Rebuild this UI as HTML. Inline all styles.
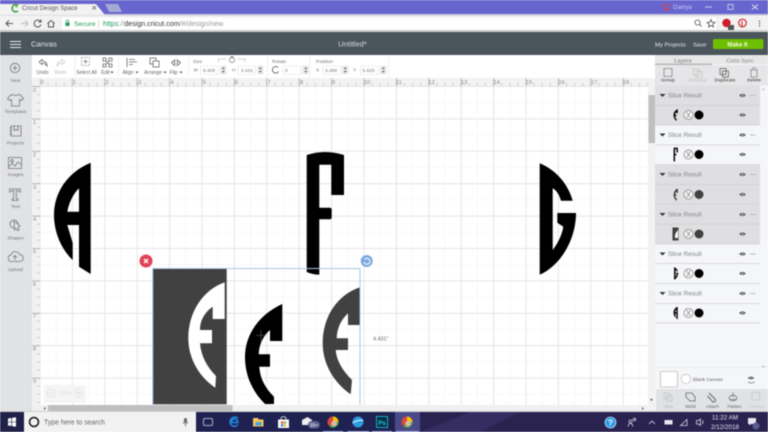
<!DOCTYPE html>
<html lang="en">
<head>
<meta charset="utf-8">
<title>Cricut Design Space</title>
<style>
html,body{margin:0;padding:0;width:768px;height:432px;overflow:hidden;background:#fff}
svg{display:block;position:absolute;left:0;top:0;filter:blur(.55px)}
text{font-family:"Liberation Sans",sans-serif}
.lb{font-size:5px;fill:#666;text-anchor:middle}
.sm{font-size:4.800px;fill:#777}
.sl{font-size:6.400px;fill:#85858b}
.ic{fill:none;stroke:#666;stroke-width:.8}
.side{font-size:4.800px;fill:#777;text-anchor:middle}
.ruler{font-size:5.600px;fill:#888}
</style>
</head>
<body>
<svg width="768" height="432" viewBox="0 0 768 432" xmlns="http://www.w3.org/2000/svg">
<defs>
<pattern id="gmin" x="39.5" y="86" width="16.2" height="16.2" patternUnits="userSpaceOnUse"><path d="M.5 0V16.2M0 .5H16.2" stroke="#f8f8f8" stroke-width="1" fill="none"/></pattern>
<pattern id="gmaj" x="39.5" y="86" width="32.4" height="32.4" patternUnits="userSpaceOnUse"><path d="M.5 0V32.4M0 .5H32.4" stroke="#e6e6e8" stroke-width="1" fill="none"/></pattern>
<pattern id="rx" x="39.5" y="78" width="8.1" height="8" patternUnits="userSpaceOnUse"><path d="M.5 5V8" stroke="#bbb" stroke-width=".7"/></pattern>
<pattern id="rxm" x="39.5" y="78" width="32.4" height="8" patternUnits="userSpaceOnUse"><path d="M.5 0V8" stroke="#aaa" stroke-width=".8"/></pattern>
<pattern id="ry" x="32" y="86" width="8" height="8.1" patternUnits="userSpaceOnUse"><path d="M5 .5H8" stroke="#bbb" stroke-width=".7"/></pattern>
<pattern id="rym" x="32" y="86" width="8" height="32.4" patternUnits="userSpaceOnUse"><path d="M0 .5H8" stroke="#aaa" stroke-width=".8"/></pattern>
<g id="eye"><path d="M-3.4 0Q0-3.2 3.4 0Q0 3.2-3.4 0Z" fill="#555"/><circle r=".9" fill="#ccc"/></g>
<g id="xc"><circle r="4.6" fill="#f4f4f6" stroke="#777" stroke-width=".6"/><path d="M-2-3L2 3M2-3L-2 3" stroke="#777" stroke-width=".6"/></g>
<path id="lA" d="M90.7 162.7C68 172 54 192 54 215C54 233 62 250 72.7 260V243L67.3 225H79V266.7L90.7 274ZM79 188.3C73 194 69 203 67.3 211.7H79Z" fill-rule="evenodd"/>
<path id="lF" d="M306.7 155Q325 149 344 155V195H331.3V164.7H319.3V207.7H330Q331.7 207.7 331.7 210V217Q331.7 219.3 330 219.3H319.3V274.7Q312 274.5 306.7 272Z"/>
<path id="lG" d="M539.7 163.3C556 170 568 184 572.7 200.7H561C559 194 556 190 552.7 188.3V250C558 243 562 235 563.3 226.7L557.3 222.7V213H576C576 240 560 266 539.7 274.7Z"/>
<path id="lE" d="M282.3 304C260 314 245 334 245 356.7C245 375 252 391 265 404H274V396.7C265 388 260 378 259.3 366.7H270V354.3H258.7C259 345 263 336 270 330V341H282.3Z"/>
<path id="lE2" d="M360 287.3C337 295 322.7 317 322.7 343.3C322.7 363 333 382 350.7 394.3L352 380C343 371 336.5 361 335.7 350H348V338.3H336.7C337 328 341 320 348 313.3V325H360Z"/>
</defs>

<!-- browser title bar -->
<rect width="768" height="15" fill="#6766cf"/>
<rect y="14" width="768" height="1.5" fill="#c9c9dc"/>
<path d="M0 15V4H96L105 15Z" fill="#f2f2f3"/>
<path d="M105 4H118L122 12H109Z" fill="#a5a9d6"/>
<path d="M18 5.5A3.6 3.6 0 1 0 18 11" fill="none" stroke="#43a047" stroke-width="1.6"/>
<circle cx="16.5" cy="6.5" r="1.2" fill="#7cc242"/>
<text x="22" y="10" font-size="6.100" fill="#555">Cricut Design Space</text>
<path d="M92.5 6L96 9.5M96 6L92.5 9.5" stroke="#666" stroke-width=".8"/>
<path d="M663 4.5H669V9L666 10.5V8.500H663Z" fill="none" stroke="#d2404a" stroke-width="1"/>
<text x="673" y="9" font-size="6" fill="#c9c9ea">Dainya</text>
<path d="M705 7H712" stroke="#c9c9ea" stroke-width="1"/>
<rect x="728" y="4.5" width="5" height="5" fill="none" stroke="#c9c9ea" stroke-width=".9"/>
<path d="M752 4.5L758 9.5M758 4.5L752 9.5" stroke="#dcdcf0" stroke-width="1"/>

<!-- browser toolbar -->
<rect y="15.5" width="768" height="15" fill="#f2f2f2"/>
<rect y="30" width="768" height="2" fill="#cfcfcf"/>
<path d="M13 23.5H6M9 20.5L6 23.5L9 26.5" fill="none" stroke="#555" stroke-width="1"/>
<path d="M21 23.5H28M25 20.5L28 23.5L25 26.5" fill="none" stroke="#bbb" stroke-width="1"/>
<path d="M40.5 21.5A3.5 3.5 0 1 0 41 24.5M41 19.5V22H38.5" fill="none" stroke="#555" stroke-width="1"/>
<path d="M47.5 23.5L51 20.5L54.5 23.5M48.5 23V27H53.5V23" fill="none" stroke="#555" stroke-width="1"/>
<rect x="61" y="17" width="656" height="13" fill="#fff" stroke="#ddd" stroke-width=".5"/>
<rect x="65.5" y="22.5" width="4" height="3.5" fill="#1f9d55"/>
<path d="M66.3 22.5V21.3A1.2 1.2 0 0 1 68.7 21.3V22.5" fill="none" stroke="#1f9d55" stroke-width=".7"/>
<text x="74" y="26" font-size="6.800" fill="#1f9d55">Secure</text>
<path d="M98.5 19.5V28" stroke="#ccc" stroke-width=".7"/>
<text x="103" y="26" font-size="7.100"><tspan fill="#1f9d55">https</tspan><tspan fill="#999">://</tspan><tspan fill="#333">design.cricut.com</tspan><tspan fill="#999">/#/design/new</tspan></text>
<circle cx="697.5" cy="22.5" r="2.6" fill="none" stroke="#666" stroke-width=".9"/><path d="M699.5 24.5L701.5 26.5" stroke="#666" stroke-width="1"/>
<path d="M711 19.5L712.1 22.2L715 22.4L712.8 24.3L713.5 27L711 25.5L708.5 27L709.2 24.3L707 22.4L709.9 22.2Z" fill="none" stroke="#555" stroke-width=".8"/>
<circle cx="726.5" cy="23" r="4.2" fill="#d11c2a"/>
<rect x="728" y="25" width="6" height="5" fill="#555"/>
<circle cx="742.5" cy="23" r="3.8" fill="none" stroke="#cb2027" stroke-width="1.1"/><path d="M742 21V26" stroke="#cb2027" stroke-width="1"/>
<path d="M759.5 20.5V26.5" stroke="#555" stroke-width="1.2" stroke-dasharray="1.2 1.2"/>

<!-- app header -->
<rect y="32" width="768" height="23" fill="#4a555c"/>
<path d="M10 41.5H21M10 44.5H21M10 47.5H21" stroke="#eee" stroke-width="1"/>
<text x="31" y="46.500" font-size="7.600" fill="#e2e5e7">Canvas</text>
<text x="352.5" y="46.500" font-size="7.600" fill="#d8dcde" text-anchor="middle">Untitled*</text>
<text x="655" y="46.500" font-size="5.900" fill="#e6e8e9">My Projects</text>
<text x="693" y="46.500" font-size="5.900" fill="#e6e8e9">Save</text>
<rect x="713" y="39" width="50.5" height="10" rx="1.5" fill="#6fbe00"/>
<text x="737.5" y="46.4" font-size="6" font-weight="bold" fill="#f3fbe6" text-anchor="middle">Make It</text>

<!-- canvas -->
<rect x="32" y="55" width="623" height="357" fill="#fff"/>
<rect x="40" y="86" width="608" height="319" fill="url(#gmin)"/>
<rect x="40" y="86" width="608" height="319" fill="url(#gmaj)"/>

<!-- edit toolbar -->
<rect x="32" y="55" width="623" height="23" fill="#fff"/>
<path d="M75 56V77M118.5 56V77M188.5 56V77M267.5 56V77M310 56V77M388.5 56V77" stroke="#ececec" stroke-width=".8"/>
<path d="M39 62L42 59.5V61Q47 61 47 66Q45 63 42 63V64.5Z" class="ic"/>
<path d="M65 62L62 59.5V61Q57 61 57 66Q59 63 62 63V64.5Z" fill="none" stroke="#ccc" stroke-width=".8"/>
<text x="42.5" y="74" class="lb">Undo</text>
<text x="60.5" y="74" class="lb" style="fill:#bbb">Redo</text>
<rect x="81.5" y="57.5" width="8" height="8" fill="none" stroke="#888" stroke-width=".7" stroke-dasharray="1.4 1"/>
<path d="M85.5 59.5V63.5M83.5 61.5H87.5" stroke="#666" stroke-width=".7"/>
<text x="86.5" y="74" class="lb">Select All</text>
<path d="M103 58H106V61H103ZM109 58H112V61H109ZM103 64H106V67H103ZM109 64H112V67H109ZM106 61L109 64M109 61L106 64" class="ic"/>
<text x="105.500" y="74" class="lb">Edit</text><path d="M110.5 71.5H113.5L112 73.5Z" fill="#555"/>
<path d="M127 58V67M129 59.5H135M129 62H137M129 64.5H133" class="ic"/>
<text x="128" y="74" class="lb">Align</text><path d="M135.5 71.5H138.5L137 73.5Z" fill="#555"/>
<rect x="150" y="58" width="6" height="6" class="ic"/><rect x="153" y="61" width="6" height="6" fill="#fff" stroke="#666" stroke-width=".8"/>
<text x="153" y="74" class="lb">Arrange</text><path d="M163.5 71.5H166.5L165 73.5Z" fill="#555"/>
<path d="M176 58V67" stroke="#888" stroke-width=".6" stroke-dasharray="1 1"/><path d="M174.5 60V65.5L171.5 62.8ZM177.5 60V65.5L180.5 62.8Z" class="ic"/>
<text x="173.5" y="74" class="lb">Flip</text><path d="M179.5 71.5H182.5L181 73.5Z" fill="#555"/>

<text x="193" y="63" class="sm">Size</text>
<path d="M218.5 62V59H226M238 59H245V62" fill="none" stroke="#aaa" stroke-width=".6"/>
<circle cx="232" cy="60" r="2.5" fill="none" stroke="#777" stroke-width=".7"/><path d="M230.5 57.5Q232 55.5 233.5 57.5" fill="none" stroke="#777" stroke-width=".7"/>
<text x="193.5" y="71.5" class="sm">W</text>
<rect x="200.5" y="66" width="17.5" height="8.5" rx="1" fill="#fff" stroke="#e2e2e2" stroke-width=".6"/>
<text x="203" y="72" class="sm">6.408</text>
<rect x="220" y="65.5" width="6.5" height="9" rx="1" fill="#e9e9e9"/><path d="M221.8 69L223.3 67.3L224.8 69ZM221.8 71L223.3 72.7L224.8 71Z" fill="#555"/>
<text x="232" y="71.5" class="sm">H</text>
<rect x="238" y="66" width="17" height="8.5" rx="1" fill="#fff" stroke="#e2e2e2" stroke-width=".6"/>
<text x="241" y="72" class="sm">4.431</text>
<rect x="257" y="65.5" width="6.5" height="9" rx="1" fill="#e9e9e9"/><path d="M258.8 69L260.3 67.3L261.8 69ZM258.8 71L260.3 72.7L261.8 71Z" fill="#555"/>

<text x="272" y="63" class="sm">Rotate</text>
<path d="M278 67.5A3.3 3.3 0 1 0 278.5 71.5" fill="none" stroke="#666" stroke-width=".9"/>
<rect x="283" y="66" width="18" height="8.5" rx="1" fill="#fff" stroke="#e2e2e2" stroke-width=".6"/>
<text x="285" y="72" class="sm">0</text>
<rect x="302.5" y="65.5" width="6.5" height="9" rx="1" fill="#e9e9e9"/><path d="M304.3 69L305.8 67.3L307.3 69ZM304.3 71L305.8 72.7L307.3 71Z" fill="#555"/>

<text x="316" y="63" class="sm">Position</text>
<text x="316" y="71.5" class="sm">X</text>
<rect x="323" y="66" width="18" height="8.5" rx="1" fill="#fff" stroke="#e2e2e2" stroke-width=".6"/>
<text x="325" y="72" class="sm">3.488</text>
<rect x="342" y="65.5" width="6.5" height="9" rx="1" fill="#e9e9e9"/><path d="M343.8 69L345.3 67.3L346.8 69ZM343.8 71L345.3 72.7L346.8 71Z" fill="#555"/>
<text x="353" y="71.5" class="sm">Y</text>
<rect x="360.5" y="66" width="18" height="8.5" rx="1" fill="#fff" stroke="#e2e2e2" stroke-width=".6"/>
<text x="362.5" y="72" class="sm">5.625</text>
<rect x="380" y="65.5" width="6.5" height="9" rx="1" fill="#e9e9e9"/><path d="M381.8 69L383.3 67.3L384.8 69ZM381.8 71L383.3 72.7L384.8 71Z" fill="#555"/>

<!-- rulers -->
<rect x="32" y="78" width="623" height="8" fill="#f2f2f3"/>
<rect x="32" y="86" width="8" height="319" fill="#f2f2f3"/>
<rect x="40" y="78" width="608" height="8" fill="url(#rx)"/>
<rect x="40" y="78" width="608" height="8" fill="url(#rxm)"/>
<rect x="32" y="86" width="8" height="319" fill="url(#ry)"/>
<rect x="32" y="86" width="8" height="319" fill="url(#rym)"/>
<g class="ruler">
<text x="40.5" y="84">0</text><text x="73" y="84">1</text><text x="105.5" y="84">2</text><text x="138" y="84">3</text><text x="170.5" y="84">4</text><text x="203" y="84">5</text><text x="235" y="84">6</text><text x="267.5" y="84">7</text><text x="300" y="84">8</text><text x="332" y="84">9</text><text x="364" y="84">10</text><text x="396" y="84">11</text><text x="428.5" y="84">12</text><text x="461" y="84">13</text><text x="493.5" y="84">14</text><text x="526" y="84">15</text><text x="558.5" y="84">16</text><text x="591" y="84">17</text><text x="623" y="84">18</text>
<text x="33" y="92">0</text><text x="33" y="124">1</text><text x="33" y="156.5">2</text><text x="33" y="189">3</text><text x="33" y="221">4</text><text x="33" y="253.5">5</text><text x="33" y="286">6</text><text x="33" y="318">7</text><text x="33" y="350.5">8</text><text x="33" y="383">9</text>
</g>

<!-- artwork -->
<use href="#lA" fill="#000"/>
<use href="#lF" fill="#000"/>
<use href="#lG" fill="#000"/>
<rect x="152.7" y="268.3" width="74" height="136" fill="#414141"/>
<path d="M224.7 282.3C203 290 188.3 312 188.3 338.3C188.3 358 199 377 215.3 387.7L216 376C207 367 201 356 200 343.3H212V330H200C200 320 205 312 212.7 306.7V319H224.7Z" fill="#fff"/>
<use href="#lE" fill="#000"/>
<use href="#lE2" fill="#414141"/>
<path d="M153 404.5V268.5H360V404.5" fill="none" stroke="#a9c6e8" stroke-width="1"/>
<path d="M153 268.5V404.5" stroke="#7a9cc4" stroke-width="1"/>
<path d="M256 335.5H266M261 330V342" stroke="#8a8a8a" stroke-width=".5" opacity=".8"/>
<circle cx="146" cy="261" r="6.5" fill="#e0435a"/>
<path d="M144 259L148 263M148 259L144 263" stroke="#fff" stroke-width="1.4"/>
<circle cx="366.7" cy="261" r="6" fill="#7ea9de"/>
<path d="M364.5 259.5A3 3 0 1 1 364 262" fill="none" stroke="#fff" stroke-width="1"/>
<text x="373" y="340.3" font-size="5.4" fill="#666">4.431"</text>

<!-- zoom control -->
<rect x="44" y="385" width="42" height="18" rx="2" fill="#f5f5f5"/>
<circle cx="51" cy="393" r="4" fill="none" stroke="#e2e2e2" stroke-width=".8"/><path d="M49 393H53" stroke="#ddd" stroke-width=".8"/>
<circle cx="78.5" cy="393" r="4" fill="none" stroke="#e2e2e2" stroke-width=".8"/><path d="M76.5 393H80.5M78.5 391V395" stroke="#ddd" stroke-width=".8"/>
<text x="65" y="395" font-size="5.4" fill="#ddd" text-anchor="middle">100%</text>

<!-- scrollbars -->
<rect x="32" y="405" width="616" height="7" fill="#f0f0f0"/>
<rect x="48" y="405" width="184.5" height="6.5" fill="#bfbfbf"/>
<path d="M45.5 407V410L43.5 408.5ZM642 407V410L644 408.5Z" fill="#666"/>
<rect x="648" y="86" width="7" height="326" fill="#f2f2f2"/>
<rect x="648.5" y="95" width="6.5" height="48" fill="#bfbfbf"/>
<path d="M650 399H653L651.5 401Z" fill="#555"/>

<!-- left sidebar -->
<rect x="0" y="55" width="32" height="357" fill="#e1e2e4"/>
<g fill="none" stroke="#777" stroke-width=".8">
<circle cx="15" cy="68" r="4.7"/><path d="M12.5 68H17.5M15 65.5V70.5"/>
<path d="M11.5 95.5L14 94.5Q17 96.5 20 94.5L22.5 95.5L25 99L22.5 100.5L21 99.5V106H13V99.5L11.5 100.5L9 99Z" transform="translate(-1.500 0)"/>
<path d="M11 126H21V136H11ZM18 126V130.5L16 129.5L14 130.5V126M9.5 128H12M9.5 131H12M9.5 134H12"/>
<rect x="8.5" y="157.5" width="13" height="11"/><circle cx="12" cy="161" r="1.3"/><path d="M8.5 167L12 163.5L15 166L18 162L21.5 165"/>
<path d="M9.5 189H20.5V192H19L18 190.5H16.3V199H18V200.5H12V199H13.7V190.5H12L11 192H9.5Z"/>
<circle cx="14" cy="224" r="4"/><path d="M14 221L20 226L18 227.5L19 230L17.5 230.5L16 228.5L14.5 230Z" fill="#e1e2e4"/>
<path d="M10.5 261.5A3.5 3.5 0 0 1 11 254.8A4.5 4.5 0 0 1 19.5 254.5A3.5 3.5 0 0 1 20 261.5ZM15 260V255.5M13 257.5L15 255.5L17 257.5"/>
</g>
<text x="15.5" y="82" class="side">New</text>
<text x="15.5" y="113" class="side">Templates</text>
<text x="15.5" y="144.5" class="side">Projects</text>
<text x="15.5" y="176" class="side">Images</text>
<text x="15.5" y="208" class="side">Text</text>
<text x="15.5" y="239.5" class="side">Shapes</text>
<text x="15.5" y="271" class="side">Upload</text>

<!-- right panel -->
<rect x="655" y="55" width="113" height="357" fill="#f5f6f8"/>
<rect x="655" y="55" width="113" height="9" fill="#e7e7e8"/>
<text x="683" y="62.3" font-size="5.800" fill="#777" text-anchor="middle">Layers</text>
<text x="740" y="62.3" font-size="5.600" fill="#888" text-anchor="middle">Color Sync</text>
<rect x="655" y="63.5" width="57" height="1.5" fill="#b8b8b8"/>
<rect x="655" y="65" width="113" height="20.5" fill="#e6e6e8"/>
<g fill="none" stroke-width=".8">
<rect x="664" y="68.5" width="8" height="8" stroke="#666" stroke-dasharray="2 .7"/>
<rect x="693" y="69" width="6" height="6" stroke="#c4c4c4"/><rect x="696" y="71.5" width="6" height="6" stroke="#c4c4c4"/>
<rect x="720" y="68.5" width="6" height="6" stroke="#666"/><rect x="722.5" y="71" width="6" height="6" stroke="#666"/>
<path d="M750 70H758M751 70.5V77H757V70.5M752.5 69V68H755.5V69" stroke="#888"/>
</g>
<text x="668" y="81.5" font-size="4.6" fill="#666" text-anchor="middle" font-weight="bold">Group</text>
<text x="697" y="81.5" font-size="4.6" fill="#bbb" text-anchor="middle">UnGroup</text>
<text x="725" y="81.5" font-size="4.6" fill="#666" text-anchor="middle" font-weight="bold">Duplicate</text>
<text x="754" y="81.5" font-size="4.6" fill="#666" text-anchor="middle" font-weight="bold">Delete</text>

<!-- layer rows -->
<rect x="655" y="85.5" width="105" height="39.5" fill="#dfdfe1"/>
<rect x="655" y="125" width="105" height="39.7" fill="#f5f6f8"/>
<rect x="655" y="164.7" width="105" height="79.3" fill="#dfdfe1"/>
<rect x="655" y="244" width="105" height="79" fill="#f5f6f8"/>
<path d="M655 105.5H760M655 125H760M655 145H760M655 164.7H760M655 184.5H760M655 204.3H760M655 224H760M655 244H760M655 263.5H760M655 283.6H760M655 303.5H760M655 323H760" stroke="#cfd0d2" stroke-width=".7"/>

<g>
<path d="M659.5 94H665.5L662.5 97Z" fill="#333"/><text x="668" y="97.600" class="sl">Slice Result</text><use href="#eye" x="742.5" y="95.5"/><path d="M750 95.5H755.5" stroke="#bbb" stroke-width="1"/>
<path d="M659.5 133.5H665.5L662.5 136.5Z" fill="#333"/><text x="668" y="137.100" class="sl">Slice Result</text><use href="#eye" x="742.5" y="135"/><path d="M750 135H755.5" stroke="#bbb" stroke-width="1"/>
<path d="M659.5 173H665.5L662.5 176Z" fill="#333"/><text x="668" y="176.600" class="sl">Slice Result</text><use href="#eye" x="742.5" y="174.5"/><path d="M750 174.5H755.5" stroke="#bbb" stroke-width="1"/>
<path d="M659.5 213H665.5L662.5 216Z" fill="#333"/><text x="668" y="216.600" class="sl">Slice Result</text><use href="#eye" x="742.5" y="214.5"/><path d="M750 214.5H755.5" stroke="#bbb" stroke-width="1"/>
<path d="M659.5 252.5H665.5L662.5 255.5Z" fill="#333"/><text x="668" y="256.100" class="sl">Slice Result</text><use href="#eye" x="742.5" y="254"/><path d="M750 254H755.5" stroke="#bbb" stroke-width="1"/>
<path d="M659.5 292H665.5L662.5 295Z" fill="#333"/><text x="668" y="295.600" class="sl">Slice Result</text><use href="#eye" x="742.5" y="293.5"/><path d="M750 293.5H755.5" stroke="#bbb" stroke-width="1"/>
</g>

<g>
<use href="#xc" x="688.5" y="115"/><circle cx="699" cy="115" r="4.5" fill="#000"/><use href="#eye" x="742.5" y="115"/>
<use href="#xc" x="688.5" y="154.5"/><circle cx="699" cy="154.5" r="4.5" fill="#000"/><use href="#eye" x="742.5" y="154.5"/>
<use href="#xc" x="688.5" y="194.5"/><circle cx="699" cy="194.5" r="4.5" fill="#414141"/><use href="#eye" x="742.5" y="194.5"/>
<use href="#xc" x="688.5" y="234"/><circle cx="699" cy="234" r="4.5" fill="#414141"/><use href="#eye" x="742.5" y="234"/>
<use href="#xc" x="688.5" y="273.5"/><circle cx="699" cy="273.5" r="4.5" fill="#000"/><use href="#eye" x="742.5" y="273.5"/>
<use href="#xc" x="688.5" y="313"/><circle cx="699" cy="313" r="4.5" fill="#000"/><use href="#eye" x="742.5" y="313"/>
</g>
<use href="#lE" transform="translate(673.5 109) scale(.115) translate(-245 -304)" fill="#000"/>
<use href="#lF" transform="translate(673.5 147.5) scale(.115) translate(-306 -152)" fill="#000"/>
<use href="#lE2" transform="translate(673.5 188.5) scale(.115) translate(-322 -287)" fill="#414141"/>
<rect x="672.5" y="227.5" width="6" height="13" fill="#414141"/>
<path d="M678 230Q674.5 233.5 675 238H678Z" fill="#fff"/>
<use href="#lG" transform="translate(674 267) scale(.115) translate(-539 -163)" fill="#000"/>
<use href="#lA" transform="translate(673.5 306.500) scale(.115) translate(-54 -162)" fill="#000"/>

<!-- panel right scrollbar arrows -->
<path d="M762 90L763.5 88L765 90Z" fill="#bbb"/>
<path d="M762 366L763.5 368L765 366Z" fill="#aaa"/>

<!-- blank canvas -->
<rect x="655" y="367.5" width="113" height="21.5" fill="#f5f6f8"/>
<path d="M655 367.5H768" stroke="#e6e6e8" stroke-width=".7"/>
<rect x="660.5" y="371.5" width="17" height="15.5" rx="1" fill="#fff" stroke="#bbb" stroke-width=".8"/>
<circle cx="686" cy="379" r="4.7" fill="#fff" stroke="#bbb" stroke-width=".7"/>
<text x="693" y="380.8" font-size="4.8" fill="#666">Blank Canvas</text>
<path d="M747.5 378Q751 375 754.5 378Q751 381 747.5 378Z" fill="#777"/><path d="M748 382Q751 384 754.500 382" fill="none" stroke="#777" stroke-width=".8"/>

<!-- panel bottom tools -->
<rect x="656" y="389" width="112" height="23" fill="#e1e2e4"/>
<g fill="none" stroke-width=".8">
<rect x="664" y="393" width="5.5" height="5.5" stroke="#c4c4c4"/><rect x="666.5" y="395.5" width="5.5" height="5.5" stroke="#c4c4c4"/>
<path d="M686 393H692L695 397V401H690L686 397Z" stroke="#666"/>
<path d="M709 393L715 399A1.5 1.5 0 0 1 712.5 401.5L707.5 396" stroke="#666" stroke-width="1"/>
<ellipse cx="733" cy="398" rx="3.8" ry="2.8" stroke="#777"/><path d="M733 392.5V397M730 399.5H736" stroke="#777"/>
<rect x="752" y="392.5" width="7.5" height="7.5" stroke="#c8c8c8"/>
</g>
<g font-size="4.6" text-anchor="middle">
<text x="668.5" y="408" fill="#bbb">Slice</text>
<text x="690.5" y="408" fill="#666">Weld</text>
<text x="712.5" y="408" fill="#666">Attach</text>
<text x="734.5" y="408" fill="#666">Flatten</text>
<text x="756.5" y="408" fill="#c4c4c4">Contour</text>
</g>
<rect y="411" width="768" height="1" fill="#d0d0d0"/>

<!-- taskbar -->
<rect y="412" width="768" height="20" fill="#2a2350"/>
<path d="M420 432L470 412H520L480 432Z" fill="#352c62"/>
<rect y="412" width="24" height="20" fill="#1f2148"/>
<path d="M8 418.5L11.3 418V421.7H8ZM12 417.9L16 417.3V421.7H12ZM8 422.3H11.3V426L8 425.5ZM12 422.3H16V426.7L12 426.1Z" fill="#fff"/>
<rect x="24" y="412" width="172" height="20" fill="#f2f2f2"/>
<circle cx="34" cy="422" r="4.5" fill="none" stroke="#111" stroke-width="1.5"/>
<text x="44" y="424.7" font-size="6.900" fill="#666">Type here to search</text>
<rect x="184" y="418" width="3" height="5" rx="1.5" fill="#666"/><path d="M183 422Q185.5 426 188 422M185.5 424.5V426.5" fill="none" stroke="#666" stroke-width=".7"/>
<rect x="196" y="412" width="199" height="20" fill="#1f2250"/>
<rect x="395" y="412" width="25" height="20" fill="#4a4a8a"/>
<rect x="203.5" y="418.5" width="9" height="7" rx="1.5" fill="none" stroke="#a9adc4" stroke-width="1"/>
<path d="M238 422.5H231.5Q231.5 419 234.5 419Q237.5 419 238 422.5ZM238 425Q233 428 230.5 424Q229 419.5 233 417.5Q236 416.5 238 418" fill="none" stroke="#1e88e5" stroke-width="1.5"/>
<path d="M253 418H258L259 419.5H263.5V426.5H253Z" fill="#f5c65a"/><rect x="255.5" y="422" width="6" height="3.5" fill="#4aa3df"/>
<rect x="278" y="419.5" width="11" height="8.5" fill="#f5f5f5"/><path d="M281 419.5V418Q283.5 415 286 418V419.5" fill="none" stroke="#f5f5f5" stroke-width=".8"/>
<rect x="281" y="421.5" width="2.2" height="2.2" fill="#e8482c"/><rect x="283.8" y="421.5" width="2.2" height="2.2" fill="#7cb82f"/><rect x="281" y="424.3" width="2.2" height="2.2" fill="#1e88e5"/><rect x="283.8" y="424.3" width="2.2" height="2.2" fill="#f5b81e"/>
<path d="M302 420L307.5 417L312 420V425H302Z" fill="#eee"/>
<rect x="308" y="421" width="12" height="7.5" rx="3.7" fill="#5a5c90"/>
<text x="314" y="427" font-size="5" fill="#eee" text-anchor="middle">99+</text>
<circle cx="333" cy="422" r="5.5" fill="#d84a3a"/><path d="M333 422L338.5 422A5.5 5.5 0 0 1 330 426.7Z" fill="#4caf50"/><path d="M333 422L338.5 422A5.5 5.5 0 0 0 333 416.5Z" fill="#f4c20d"/><circle cx="334" cy="423.5" r="2.8" fill="#d8b8a8"/>
<circle cx="358" cy="422" r="5.5" fill="#2b9be0"/><path d="M352.5 423Q358 419.5 363 420.5" stroke="#fff" stroke-width="1" fill="none"/>
<rect x="376.5" y="416.5" width="11" height="11" fill="#06303f" stroke="#25c5e8" stroke-width=".8"/>
<text x="382" y="424.8" font-size="6.2" font-weight="bold" fill="#25c5e8" text-anchor="middle">Ps</text>
<circle cx="407" cy="422" r="5.5" fill="#d84a3a"/><path d="M407 422L412.5 422A5.5 5.5 0 0 1 404 426.7Z" fill="#4caf50"/><path d="M407 422L412.5 422A5.5 5.5 0 0 0 407 416.5Z" fill="#f4c20d"/><circle cx="408" cy="423.5" r="2.8" fill="#d8b8a8"/>
<path d="M323 431.5H343M347.5 431.5H369M372 431.5H392M396 431.5H419" stroke="#9aa0d8" stroke-width="1"/>

<circle cx="610.5" cy="422.5" r="5.5" fill="#2f9be8" stroke="#dff" stroke-width=".6"/>
<text x="610.5" y="425.5" font-size="8" font-weight="bold" fill="#fff" text-anchor="middle">?</text>
<g fill="none" stroke="#d8d8e4" stroke-width=".8">
<circle cx="630.5" cy="421.5" r="1.5"/><path d="M628 426.5Q628.5 423.5 630.5 423.5Q632.5 423.5 633 426.5"/><circle cx="634.5" cy="419.5" r="1.2"/>
<path d="M649 424L652 421L655 424"/>
<path d="M680.5 425.5L687 419.5V425.5Z"/>
<path d="M696.5 420.5H698.5L700.5 419V425.5L698.5 424H696.5ZM702.5 420.5Q703.5 422.3 702.5 424"/>
</g>
<rect x="664.5" y="420" width="8" height="4.5" fill="#e8e8f0"/>
<text x="725" y="419.5" font-size="6.3" fill="#e8e8f0" text-anchor="middle">11:22 AM</text>
<text x="725" y="429" font-size="6.3" fill="#e8e8f0" text-anchor="middle">2/12/2018</text>
<path d="M748 418H756V424H751L749.5 425.5V424H748Z" fill="#e8e8f0"/>
<circle cx="756" cy="426" r="3.5" fill="#5a5c90"/>
</svg>
</body>
</html>
